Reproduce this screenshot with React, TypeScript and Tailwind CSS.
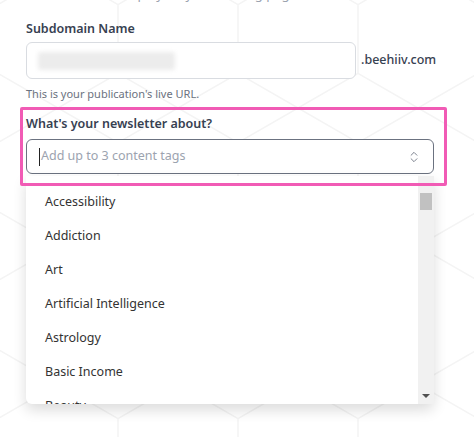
import { ChevronsUpDown } from 'lucide-react';

const TAGS = [
  'Accessibility',
  'Addiction',
  'Art',
  'Artificial Intelligence',
  'Astrology',
  'Basic Income',
  'Beauty',
];

function HexBackground() {
  return (
    <svg className="absolute inset-0 h-full w-full" aria-hidden="true">
      <defs>
        <pattern
          id="hex"
          width="120"
          height="138"
          patternUnits="userSpaceOnUse"
          x="-2"
          y="-30"
        >
          <path
            d="M60 0 L120 34.5 L120 103.5 L60 138 L0 103.5 L0 34.5 Z M60 138 L60 170 M60 0 L60 -32"
            fill="none"
            stroke="#f4f4f4"
            strokeWidth="1.5"
          />
        </pattern>
      </defs>
      <rect width="100%" height="100%" fill="url(#hex)" />
    </svg>
  );
}

export default function App() {
  return (
    <div
      className="relative h-[437px] w-[474px] overflow-hidden bg-white text-[#374151]"
      style={{ fontFamily: '"Noto Sans", "Open Sans", sans-serif' }}
    >
      <HexBackground />

      <div className="relative">
        <p className="-mt-[14px] pl-[120px] text-[13px] leading-[16px] text-[#9ca3af]">
          display on your landing page
        </p>

        <div className="pl-[26px] pt-[18px]">
          <label className="block text-[12.5px] font-semibold leading-[18px] text-[#374151]">
            Subdomain Name
          </label>
          <div className="mt-[4px] flex items-center">
            <div className="flex h-[37px] w-[330px] items-center rounded-[6px] border border-[#d9dce1] bg-white px-[11px]">
              <div className="h-[18px] w-[137px] rounded-[3px] bg-[#ececec] blur-[2px]" />
            </div>
            <span className="ml-[5px] text-[12.5px] font-medium text-[#374151]">
              .beehiiv.com
            </span>
          </div>
          <p className="mt-[8px] text-[11px] leading-[14px] text-[#6b7280]">
            This is your publication's live URL.
          </p>
        </div>

        <div className="relative mt-[11px] pl-[26px]">
          <label className="block pt-[3px] text-[12.5px] font-semibold leading-[18px] text-[#374151]">
            What's your newsletter about?
          </label>
          <div className="mt-[6px] flex h-[35px] w-[408px] items-center rounded-[6px] border border-[#6b7280] bg-white pl-[12px] pr-[12px]">
            <span className="h-[18px] w-px bg-[#222]" />
            <span className="ml-px flex-1 text-[12.5px] text-[#9ca3af]">
              Add up to 3 content tags
            </span>
            <ChevronsUpDown size={14} strokeWidth={1.5} className="text-[#6b7280]" />
          </div>

          <div className="absolute left-[26px] top-[64px] flex h-[228px] w-[408px] rounded-b-[6px] bg-white shadow-[0_6px_14px_rgba(0,0,0,0.14)]">
            <ul className="flex-1 overflow-hidden pt-[9px]">
              {TAGS.map((tag) => (
                <li
                  key={tag}
                  className="flex h-[34px] items-center pl-[19px] text-[12.5px] text-[#333333]"
                >
                  {tag}
                </li>
              ))}
            </ul>
            <div className="flex w-[16px] flex-col items-center bg-[#f1f1f1]">
              <div className="h-[17px]" />
              <div className="h-[17px] w-[12px] bg-[#c1c1c1]" />
              <div className="flex-1" />
              <div className="mb-[6px] h-0 w-0 border-x-[4px] border-t-[4px] border-x-transparent border-t-[#505050]" />
            </div>
          </div>

          <div className="pointer-events-none absolute -top-[5px] left-[20px] h-[79px] w-[427px] rounded-[2px] border-[3px] border-[#f15bb5]" />
        </div>
      </div>
    </div>
  );
}
